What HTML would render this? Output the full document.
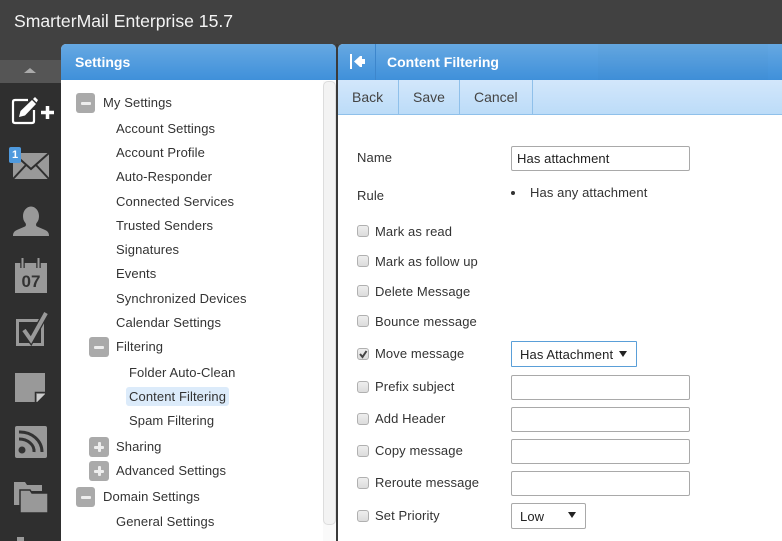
<!DOCTYPE html>
<html><head><meta charset="utf-8"><style>
html,body{margin:0;padding:0}
body{width:782px;height:541px;overflow:hidden;position:relative;background:#2f2f2f;font-family:"Liberation Sans",Arial,sans-serif;font-size:13px;letter-spacing:.1px;color:#333}
div,span,svg{position:absolute}
.t{white-space:nowrap;line-height:20px;height:20px;margin-top:1px}
.b{width:19px;height:20px;background:#aaa;border-radius:3px}
.w{width:20px}
.b:before{content:"";position:absolute;left:5px;top:8.500px;width:10px;height:3px;background:#eee;border-radius:1px}
.p:after{content:"";position:absolute;left:8.500px;top:5px;width:3px;height:10px;background:#eee;border-radius:1px}
.c{width:10px;height:10px;background:linear-gradient(#eee,#dcdcdc);border:1px solid #b0b0b0;border-radius:3px;left:357px}
.i{left:511px;width:177px;height:23px;background:#fff;border:1px solid #a9a9a9;border-radius:2px}
.h{background:linear-gradient(#66a8e2,#3f90da);height:36px;top:44px}
.m{font-size:14px;letter-spacing:0;color:#444;margin-top:0}
.s{font-size:14px;letter-spacing:0;font-weight:bold;color:#fff;margin-top:0}
</style></head><body>
<div style="left:0;top:0;width:782px;height:60px;background:#414141"></div>
<div class="t" style="left:14px;top:11px;margin-top:0;font-size:17.600px;letter-spacing:0;color:#f4f4f4">SmarterMail Enterprise 15.7</div>
<div style="left:0;top:60px;width:61px;height:23px;background:#555"></div>
<div style="left:24px;top:68px;width:0;height:0;border-left:6px solid transparent;border-right:6px solid transparent;border-bottom:5px solid #aaa"></div>

<svg style="left:0;top:83px" width="61" height="458" viewBox="0 83 61 458">
<path d="M28 100H15q-2 0-2 2v19q0 2 2 2h17q2 0 2-2v-11" fill="none" stroke="#fff" stroke-width="2.200"/>
<path d="M19 117l1.500-6 11.500-11 4 4-11 11.500zM33 99l2-2 3 3-1.500 2.500z" fill="#fff"/>
<path d="M41 112.500h13M47.500 106v13" stroke="#fff" stroke-width="3.500" fill="none"/>
<path d="M13 153h36v26H13z" fill="#999"/>
<path d="M13 153l18 16 18-16M13 179l13-14M49 179l-13-14" fill="none" stroke="#2f2f2f" stroke-width="2"/>
<path d="M13 236c0-3 1-5 5-6.500l7-3c1.500-1 1-3 0-4-1.500-2-2-4-2-6.500 0-5 3.500-9.500 8-9.500s8 4.500 8 9.500c0 2.500-.5 4.500-2 6.500-1 1-1.500 3 0 4l7 3c4 1.500 5 3.500 5 6.500z" fill="#999"/>
<path d="M15 263h32v30H15z" fill="#999"/>
<path d="M22.500 258v10M38.500 258v10" stroke="#2f2f2f" stroke-width="4.500" fill="none"/>
<path d="M22.500 258v10M38.500 258v10" stroke="#999" stroke-width="2" fill="none"/>
<path d="M17.500 320.500h25v24h-25z" fill="none" stroke="#999" stroke-width="3"/>
<path d="M24 330l7 10 15-27" fill="none" stroke="#2f2f2f" stroke-width="6.500"/>
<path d="M24 330l7 10 15-27" fill="none" stroke="#999" stroke-width="4"/>
<path d="M15 373h30v21l-8 8H15z" fill="#999"/>
<path d="M37 394h8l-8 8z" fill="#ccc"/>
<path d="M35.500 402v-9.500h10" fill="none" stroke="#2f2f2f" stroke-width="1.500"/>
<rect x="15" y="426" width="32" height="32" rx="2" fill="#999"/>
<circle cx="22" cy="450" r="3.500" fill="#333"/>
<path d="M19 439a15 12 0 0 1 15 13M19 432a22 20 0 0 1 23 20" fill="none" stroke="#333" stroke-width="3"/>
<path d="M14 482h11l2 3h15v6H22v14h-8z" fill="#999"/>
<path d="M20 490h10l2 3h16v20H20z" fill="#999" stroke="#2f2f2f" stroke-width="1.500"/>
<path d="M17 537h7v4h-7z" fill="#999"/>
</svg>
<div class="t" style="left:20px;top:271px;width:22px;text-align:center;font-size:17px;font-weight:bold;letter-spacing:0;color:#333">07</div>
<div style="left:9px;top:147px;width:12px;height:16px;background:#4f9ade;border-radius:2px;color:#fff;font-weight:bold;font-size:11px;letter-spacing:0;line-height:16px;text-align:center">1</div>

<div style="left:61px;top:44px;width:275px;height:497px;background:#fff;border-radius:5px 5px 0 0;overflow:hidden">
<div class="h" style="left:0;top:0;width:275px"></div>
<div class="t s" style="left:14px;top:8px">Settings</div>
</div>
<div style="left:323px;top:81px;width:13px;height:460px;background:#fafafa"></div>
<div style="left:323px;top:81px;width:13px;height:444px;background:#f3f3f3;border:1px solid #ddd;border-radius:5px;box-sizing:border-box"></div>

<div class="b" style="left:76px;top:93px"></div><div class="t" style="left:103px;top:92px">My Settings</div>
<div class="t" style="left:116px;top:118px">Account Settings</div>
<div class="t" style="left:116px;top:142px">Account Profile</div>
<div class="t" style="left:116px;top:166px">Auto-Responder</div>
<div class="t" style="left:116px;top:191px">Connected Services</div>
<div class="t" style="left:116px;top:215px">Trusted Senders</div>
<div class="t" style="left:116px;top:239px">Signatures</div>
<div class="t" style="left:116px;top:263px">Events</div>
<div class="t" style="left:116px;top:288px">Synchronized Devices</div>
<div class="t" style="left:116px;top:312px">Calendar Settings</div>
<div class="b w" style="left:89px;top:337px"></div><div class="t" style="left:116px;top:336px">Filtering</div>
<div class="t" style="left:129px;top:362px">Folder Auto-Clean</div>
<div style="left:126px;top:387px;width:103px;height:19px;background:#dcebfa;border-radius:3px"></div>
<div class="t" style="left:129px;top:386px">Content Filtering</div>
<div class="t" style="left:129px;top:410px">Spam Filtering</div>
<div class="b p w" style="left:89px;top:437px"></div><div class="t" style="left:116px;top:436px">Sharing</div>
<div class="b p w" style="left:89px;top:461px"></div><div class="t" style="left:116px;top:460px">Advanced Settings</div>
<div class="b" style="left:76px;top:487px"></div><div class="t" style="left:103px;top:486px">Domain Settings</div>
<div class="t" style="left:116px;top:511px">General Settings</div>

<div style="left:338px;top:44px;width:444px;height:497px;background:#fff;border-radius:5px 0 0 0;overflow:hidden">
<div class="h" style="left:0;top:0;width:444px"></div>
<div style="left:260px;top:0;width:170px;height:36px;background:rgba(0,0,0,.012)"></div>
<div style="left:37px;top:0;width:1px;height:36px;background:#3d86cc"></div>
<div class="t s" style="left:49px;top:8px">Content Filtering</div>
<div style="left:12px;top:10px;width:2px;height:15px;background:#fff"></div>
<svg style="left:16px;top:10px" width="12" height="15"><path d="M0 7.500L6 2h2v3h3v5H8v3H6z" fill="#fff"/></svg>
<div style="left:0;top:36px;width:444px;height:34px;background:linear-gradient(#d3e7fb,#bcdcf8);border-bottom:1px solid #8fc0ea"></div>
<div style="left:60px;top:36px;width:1px;height:35px;background:#8fc0ea"></div>
<div style="left:121px;top:36px;width:1px;height:35px;background:#8fc0ea"></div>
<div style="left:194px;top:36px;width:1px;height:35px;background:#8fc0ea"></div>
<div class="t m" style="left:14px;top:43px">Back</div>
<div class="t m" style="left:75px;top:43px">Save</div>
<div class="t m" style="left:136px;top:43px">Cancel</div>
</div>
<div style="left:336px;top:44px;width:2px;height:497px;background:#3a3a3a"></div>

<div class="t" style="left:357px;top:147px">Name</div>
<div class="i" style="top:146px"></div>
<div class="t" style="left:517px;top:148px;color:#222">Has attachment</div>
<div class="t" style="left:357px;top:185px">Rule</div>
<div style="left:511px;top:191px;width:4px;height:4px;border-radius:50%;background:#333"></div>
<div class="t" style="left:530px;top:182px">Has any attachment</div>

<div class="c" style="top:225px"></div><div class="t" style="left:375px;top:221px">Mark as read</div>
<div class="c" style="top:255px"></div><div class="t" style="left:375px;top:251px">Mark as follow up</div>
<div class="c" style="top:285px"></div><div class="t" style="left:375px;top:281px">Delete Message</div>
<div class="c" style="top:315px"></div><div class="t" style="left:375px;top:311px">Bounce message</div>
<div class="c" style="top:348px"></div><svg style="left:357px;top:348px" width="12" height="12"><path d="M3 6l2.500 3L9.500 3" fill="none" stroke="#444" stroke-width="2"/></svg><div class="t" style="left:375px;top:343px">Move message</div>
<div style="left:511px;top:341px;width:124px;height:24px;background:#fff;border:1px solid #5a9fd8;border-radius:1px"></div>
<div class="t" style="left:520px;top:344px;color:#222">Has Attachment</div>
<div style="left:619px;top:351px;width:0;height:0;border-left:4px solid transparent;border-right:4px solid transparent;border-top:6px solid #222"></div>
<div class="c" style="top:381px"></div><div class="t" style="left:375px;top:376px">Prefix subject</div>
<div class="i" style="top:375px"></div>
<div class="c" style="top:413px"></div><div class="t" style="left:375px;top:408px">Add Header</div>
<div class="i" style="top:407px"></div>
<div class="c" style="top:445px"></div><div class="t" style="left:375px;top:440px">Copy message</div>
<div class="i" style="top:439px"></div>
<div class="c" style="top:477px"></div><div class="t" style="left:375px;top:472px">Reroute message</div>
<div class="i" style="top:471px"></div>
<div class="c" style="top:510px"></div><div class="t" style="left:375px;top:505px">Set Priority</div>
<div style="left:511px;top:503px;width:73px;height:24px;background:#fff;border:1px solid #a9a9a9;border-radius:2px"></div>
<div class="t" style="left:520px;top:506px;color:#222">Low</div>
<div style="left:568px;top:512px;width:0;height:0;border-left:4px solid transparent;border-right:4px solid transparent;border-top:6px solid #222"></div>
</body></html>
